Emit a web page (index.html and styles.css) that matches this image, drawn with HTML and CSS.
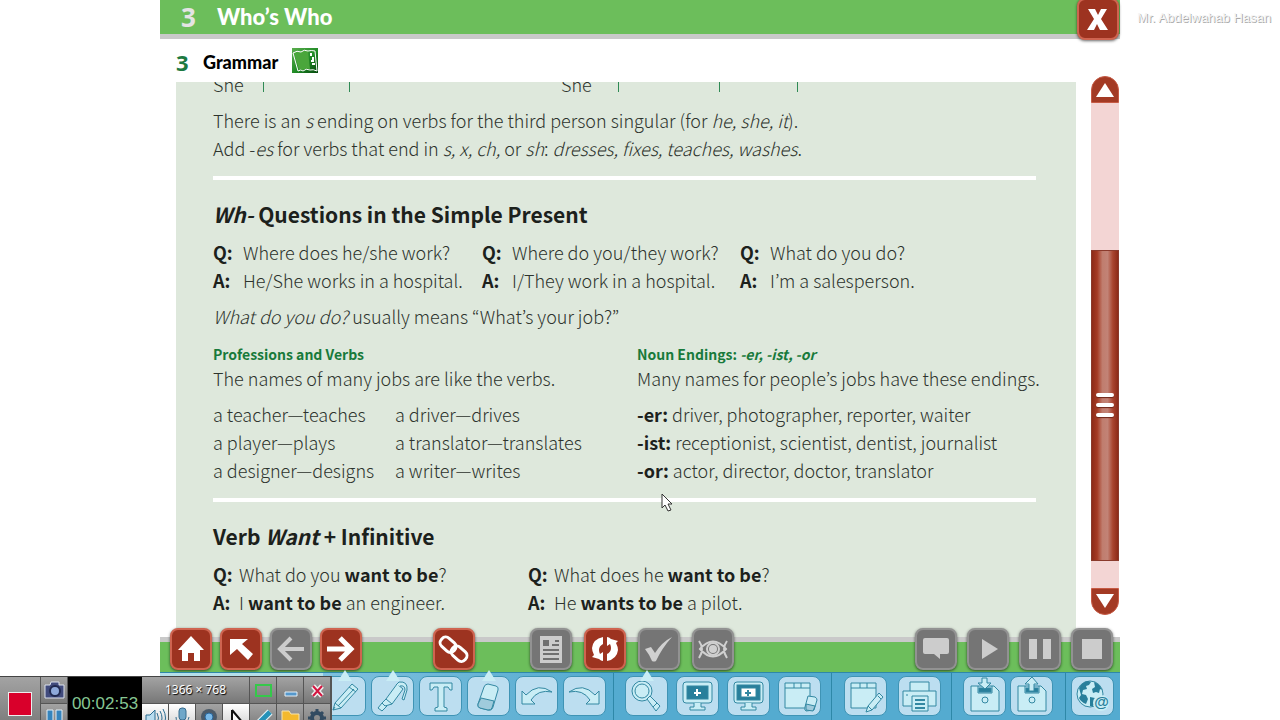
FILE: index.html
```
<!DOCTYPE html>
<html lang="en">
<head>
    <meta charset="UTF-8">
    <meta name="viewport" content="width=device-width, initial-scale=1.0">
    <title>Who's Who - Grammar</title>
    <link rel="stylesheet" href="styles.css">
</head>
<body>
    <div class="stage">
        <header class="unit-bar">
            <span class="unit-number">3</span>
            <h1>Who’s Who</h1>
            <button class="key close-key" aria-label="Close">
                <svg viewBox="0 0 42 42"><path fill="#fff" d="M11 11h7l3 6 3-6h6l-6 10 7 11h-8l-3-6-3 6h-7l7-11z"/></svg>
            </button>
        </header>

        <main class="page">
            <section class="left">
                <div class="lesson-title">
                    <span class="lesson-number">3</span>
                    <h2>Grammar</h2>
                    <svg class="book" viewBox="0 0 26 25">
                        <defs><linearGradient id="leaf" x1="0" y1="0" x2="1" y2="1"><stop offset="0" stop-color="#5cae4e"/><stop offset=".55" stop-color="#1f8a25"/><stop offset="1" stop-color="#04470c"/></linearGradient></defs>
                        <path fill="url(#leaf)" d="M0 0h26v25H0z"/>
                        <path fill="#4aa63b" d="M2 4q4-2 7 0 4-2 7-1l2 18q-4-1-7 1-2-1-4 0z"/>
                        <path fill="none" stroke="#fff" d="M1 5q4-3 8-1 3-3 7-1 3-1 7 0l2 20q-4-2-7-1-4-2-7 1-2-2-5 0z"/>
                        <path fill="none" stroke="#fff" stroke-width="2" d="M19 5v3m2 1v3m-2 1h3m-2 3h3"/>
                    </svg>
                </div>
                <article class="lesson">
                    <table class="verb-table">
                        <tr><td>She</td><td></td><td></td><td>She</td><td></td><td></td><td></td></tr>
                    </table>
                    <p class="note">There is an <i>s</i> ending on verbs for the third person singular (for <i>he, she, it</i>).<br>
                    Add -<i>es</i> for verbs that end in <i>s, x, ch,</i> or <i>sh</i>: <i>dresses, fixes, teaches, washes</i>.</p>
                    <hr>
                    <h3><i>Wh-</i> Questions in the Simple Present</h3>
                    <div class="questions three">
                        <dl><dt>Q:</dt><dd>Where does he/she work?</dd><dt>A:</dt><dd>He/She works in a hospital.</dd></dl>
                        <dl><dt>Q:</dt><dd>Where do you/they work?</dd><dt>A:</dt><dd>I/They work in a hospital.</dd></dl>
                        <dl><dt>Q:</dt><dd>What do you do?</dd><dt>A:</dt><dd>I’m a salesperson.</dd></dl>
                    </div>
                    <p class="usage"><i>What do you do?</i> usually means “What’s your job?”</p>
                    <div class="columns">
                        <section>
                            <h4>Professions and Verbs</h4>
                            <p>The names of many jobs are like the verbs.</p>
                            <div class="pairs">
                                <p>a teacher—teaches<br>a player—plays<br>a designer—designs</p>
                                <p>a driver—drives<br>a translator—translates<br>a writer—writes</p>
                            </div>
                        </section>
                        <section>
                            <h4>Noun Endings: <i>-er, -ist, -or</i></h4>
                            <p>Many names for people’s jobs have these endings.</p>
                            <p class="endings"><b>-er:</b> driver, photographer, reporter, waiter<br>
                            <b>-ist:</b> receptionist, scientist, dentist, journalist<br>
                            <b>-or:</b> actor, director, doctor, translator</p>
                        </section>
                    </div>
                    <hr>
                    <h3>Verb <i>Want</i> + Infinitive</h3>
                    <div class="questions two">
                        <dl><dt>Q:</dt><dd>What do you <b>want to be</b>?</dd><dt>A:</dt><dd>I <b>want to be</b> an engineer.</dd></dl>
                        <dl><dt>Q:</dt><dd>What does he <b>want to be</b>?</dd><dt>A:</dt><dd>He <b>wants to be</b> a pilot.</dd></dl>
                    </div>
                </article>
            </section>
            <div class="scroller">
                <button class="scroll-up" aria-label="Scroll up"><svg viewBox="0 0 28 27"><path fill="#fff" d="M14 7l9 14H5z"/></svg></button>
                <div class="track">
                    <div class="thumb"><span></span><span></span><span></span></div>
                </div>
                <button class="scroll-down" aria-label="Scroll down"><svg viewBox="0 0 28 27"><path fill="#fff" d="M14 20L5 6h18z"/></svg></button>
            </div>
        </main>

        <nav class="controls">
            <div class="keys start">
                <button class="key" aria-label="Home"><svg viewBox="0 0 42 42"><path fill="#fff" d="M21 8l13 14h-4v11h-6v-8h-6v8h-6V22H8z"/></svg></button>
                <button class="key" aria-label="Menu"><svg viewBox="0 0 42 42"><path fill="#fff" d="M10 11h18l-6 5 11 10-5 6-11-11-7 6z"/></svg></button>
                <button class="key off" aria-label="Back"><svg viewBox="0 0 42 42"><path fill="none" stroke="#ccc" stroke-width="4" d="M34 21H11m10-11L10 21l11 11"/></svg></button>
                <button class="key" aria-label="Next"><svg viewBox="0 0 42 42"><path fill="none" stroke="#fff" stroke-width="5" d="M7 21h24M20 10l11 11-11 11"/></svg></button>
            </div>
            <div class="keys">
                <button class="key" aria-label="Link"><svg viewBox="0 0 42 42"><g fill="none" stroke="#fff" stroke-width="3"><rect x="7" y="11" width="17" height="11" rx="5" transform="rotate(42 15 16)"/><rect x="18" y="20" width="17" height="11" rx="5" transform="rotate(42 26 25)"/></g></svg></button>
            </div>
            <div class="keys middle">
                <button class="key off" aria-label="Text"><svg viewBox="0 0 42 42"><path fill="#ccc" d="M10 8h22v27H10z"/><path fill="#707070" d="M13 12h6v6h-6zm12 0h4v2h-4zm-3 4h7v2h-7zm-9 5h16v2H13zm0 4h16v2H13zm0 5h16v2H13z"/></svg></button>
                <button class="key" aria-label="Reload"><svg viewBox="0 0 42 42"><g fill="#fff"><path id="turn" d="M19 9v7q-4 2-4 6 0 2 1 4l3-2v9q-2 0-4-2l-7-2 2-2q-2-4-2-7Q9 11 19 9z"/><use href="#turn" transform="rotate(180 21 21)"/></g></svg></button>
                <button class="key off" aria-label="Check"><svg viewBox="0 0 42 42"><path fill="#d0d0d0" d="M7 21l6-2 4 6Q24 14 34 9q-10 11-16 24-2 1-4 0-3-7-7-12z"/></svg></button>
                <button class="key off" aria-label="Show answers"><svg viewBox="0 0 42 42"><g fill="none" stroke="#d0d0d0" stroke-width="2"><path d="M8 21q13-15 26 0-13 15-26 0zM7 13q6 8 0 17M35 13q-6 8 0 17"/><circle cx="21" cy="21" r="6"/></g><circle cx="21" cy="21" r="4" fill="#d0d0d0"/></svg></button>
            </div>
            <div class="keys end">
                <button class="key off" aria-label="Transcript"><svg viewBox="0 0 42 42"><path fill="#ccc" d="M10 10h22q2 0 2 2v12q0 2-2 2h-7v5l-6-5h-9q-2 0-2-2V12q0-2 2-2z"/></svg></button>
                <button class="key off" aria-label="Play"><svg viewBox="0 0 42 42"><path fill="#ccc" d="M15 11l16 10-16 10z"/></svg></button>
                <button class="key off" aria-label="Pause"><svg viewBox="0 0 42 42"><path fill="#ccc" d="M10 11h8v20h-8zm14 0h8v20h-8z"/></svg></button>
                <button class="key off" aria-label="Stop"><svg viewBox="0 0 42 42"><path fill="#ccc" d="M11 11h20v20H11z"/></svg></button>
            </div>
        </nav>

        <nav class="tools">
            <div class="tool-group drawing">
                <button class="tool more" aria-label="Pencil"><svg viewBox="0 0 43 40"><path d="M12 27L29 8l6 5-17 19-8 2zM12 27l6 5M26 11l7 5M15 30L31 13M10 34l2-3"/></svg></button>
                <button class="tool more" aria-label="Marker"><svg viewBox="0 0 43 40"><path d="M15 23L26 8l6 5-11 15-7 2-3-3zM15 23l6 5M11 27l-4 5 4 3 5-5"/><path d="M25 9l3-3q9-1 8 8l-3 10-2-1 3-9q0-5-5-4"/></svg></button>
                <button class="tool" aria-label="Text"><svg viewBox="0 0 43 40"><path d="M11 7h22v7h-2l-2-3h-4v20l3 1v3H16v-3l3-1V11h-4l-2 3h-2z"/></svg></button>
                <button class="tool more" aria-label="Eraser"><svg viewBox="0 0 43 40"><path d="M17 11q1-3 4-3l8 2q3 1 2 4l-5 17q-1 4-5 3l-8-2q-3-1-2-4z"/><path fill="#9fcbdc" d="M14 22l13 3-2 7q-1 2-4 2l-8-2q-3-1-2-4z"/></svg></button>
                <button class="tool" aria-label="Undo"><svg viewBox="0 0 43 40"><path d="M7 15v13h13l-4-4q7-11 21-8Q23 6 11 19z"/></svg></button>
                <button class="tool" aria-label="Redo"><svg viewBox="0 0 43 40"><path d="M36 15v13H23l4-4q-7-11-21-8 14-10 26 3z"/></svg></button>
            </div>
            <div class="tool-group viewing">
                <button class="tool more" aria-label="Zoom"><svg viewBox="0 0 43 40"><circle cx="17" cy="15" r="10"/><circle cx="17" cy="15" r="7"/><path d="M22 23l3-3 10 10-4 5zM28 31l4-4"/></svg></button>
                <button class="tool" aria-label="Zoom screen"><svg viewBox="0 0 43 40"><rect x="7" y="6" width="29" height="21" rx="3"/><path d="M18 27v4h-4v3h15v-3h-4v-4"/><rect x="11" y="10" width="21" height="13" fill="#287f9b"/><path stroke="#fff" stroke-width="2" d="M21 13v7m-3-3h7"/></svg></button>
                <button class="tool" aria-label="Show screen"><svg viewBox="0 0 43 40"><rect x="7" y="6" width="29" height="21" rx="3"/><path d="M18 27v4h-4v3h15v-3h-4v-4"/><rect x="10" y="9" width="23" height="15" fill="#287f9b"/><rect x="14" y="12" width="15" height="9" fill="#fff"/><path stroke-width="2" d="M21 14v6m-3-3h6"/></svg></button>
                <button class="tool" aria-label="Clear page"><svg viewBox="0 0 43 40"><path d="M7 7h25v25H7zM7 12h25M16 7v5M23 7v5"/><path d="M30 20l7 1q2 1 2 3l-3 10-8 1q-2-1-1-4z"/><path fill="#9fcbdc" d="M28 28l9 2-2 5-7-1z"/></svg></button>
            </div>
            <div class="tool-group output">
                <button class="tool" aria-label="Edit page"><svg viewBox="0 0 43 40"><path d="M7 7h25v25H7zM7 12h25M16 7v5M23 7v5"/><path d="M24 30l11-13 4 4-11 13-6 2zM24 30l4 4M34 20l3 3"/></svg></button>
                <button class="tool" aria-label="Print"><svg viewBox="0 0 43 40"><path d="M12 6h19v9h7v15H5V15h7zM8 19h2M12 15h19"/><path d="M14 20h16v15H14z"/><path stroke-width="2" d="M17 24h10M17 28h10M17 32h10"/></svg></button>
            </div>
            <div class="tool-group saving">
                <button class="tool" aria-label="Save"><svg viewBox="0 0 43 40"><path d="M8 10h23l5 5v20H8zM15 10v7h14v-7"/><path fill="#287f9b" d="M16 12h12v4H16z"/><circle cx="22" cy="24" r="3"/><path d="M19 2h5v5h4l-6 6-7-6h4z"/></svg></button>
                <button class="tool" aria-label="Open"><svg viewBox="0 0 43 40"><path d="M8 10h23l5 5v20H8zM15 10v7h14v-7"/><path fill="#287f9b" d="M16 12h12v4H16z"/><circle cx="22" cy="24" r="3"/><path d="M19 15V8h-4l7-7 6 7h-4v7z"/></svg></button>
            </div>
            <div class="tool-group web">
                <button class="tool" aria-label="Web"><svg viewBox="0 0 43 40"><circle cx="19" cy="18" r="13"/><path fill="#287f9b" stroke="none" d="M8 12q3-6 9-7l3 1-2 3-3 1 1 3-4 1-1 4 4 1 2 4-2 5q-5-2-7-6l2-3zM23 6q6 2 8 8l-2-1-1 4-3-1-3 1-1-4 3-2zM19 21l5 1 1 3-3 5h-3z"/><circle cx="30" cy="27" r="8" stroke="none"/></svg><span class="at">@</span></button>
            </div>
        </nav>
    </div>

    <aside class="watermark">Mr. Abdelwahab Hasan</aside>

    <svg class="cursor" viewBox="0 0 12 19"><path fill="#fff" stroke="#333" d="M1 1v14l3-3 3 6 3-1-3-6h4z"/></svg>

    <!-- screen recorder, half below the window edge -->
    <div class="recorder">
        <button class="cell record" aria-label="Stop recording"><span></span></button>
        <button class="cell" aria-label="Take screenshot"><svg viewBox="0 0 27 27"><path fill="#414b7d" stroke="#dce2ee" d="M4 8h5l1-3h8v3h5v13H4z"/><circle cx="14" cy="14" r="5" fill="#8ea9da" stroke="#20294f" stroke-width="2"/></svg></button>
        <time class="timer">00:02:53</time>
        <span class="cell size">1366 × 768</span>
        <button class="cell" aria-label="Recording area"><svg viewBox="0 0 27 27"><path fill="none" stroke="#35c84a" stroke-width="2" d="M6 8h15v11H6z"/></svg></button>
        <button class="cell" aria-label="Minimize"><svg viewBox="0 0 27 27"><path fill="#5598cc" stroke="#e5eef5" d="M8 15h12v4H8z"/></svg></button>
        <button class="cell" aria-label="Close recorder"><svg viewBox="0 0 27 27"><path stroke="#eee" stroke-width="5" d="M9 9l9 10M18 9L9 19"/><path stroke="#d41540" stroke-width="2" d="M9 9l9 10M18 9L9 19"/></svg></button>
        <button class="cell" aria-label="Pause recording"><svg viewBox="0 0 27 27"><path fill="#3584bd" stroke="#e5eef5" d="M6 6h6v17H6zm9 0h6v17h-6z"/></svg></button>
        <button class="cell lit" aria-label="Sound"><svg viewBox="0 0 27 27"><g fill="#b8dcef" stroke="#2b6c91"><path d="M4 11h4l5-5v16l-5-5H4z"/><path fill="none" d="M15 9q3 5 0 10M18 7q4 7 0 14M21 5q5 9 0 18"/></g></svg></button>
        <button class="cell lit" aria-label="Microphone"><svg viewBox="0 0 27 27"><rect x="10" y="4" width="7" height="12" rx="3" fill="#6fa7c9" stroke="#376c8e"/><path fill="none" stroke="#376c8e" d="M7 13q0 6 6 6t7-6M13 19v5"/></svg></button>
        <button class="cell" aria-label="Webcam"><svg viewBox="0 0 27 27"><circle cx="13" cy="13" r="8" fill="#4b5a68"/><circle cx="13" cy="13" r="4" fill="#79b9e8" stroke="#28659a"/></svg></button>
        <button class="cell lit" aria-label="Show cursor"><svg viewBox="0 0 27 27"><path fill="#fff" stroke="#111" stroke-width="2" d="M9 6v17l4-4 3 7M9 6l11 13h-7"/></svg></button>
        <button class="cell" aria-label="Draw"><svg viewBox="0 0 27 27"><path stroke="#e8f5fa" stroke-width="7" d="M8 20L20 8"/><path stroke="#2592b8" stroke-width="5" d="M8 20L20 8"/></svg></button>
        <button class="cell" aria-label="Open folder"><svg viewBox="0 0 27 27"><path fill="#f4b92d" stroke="#f8e5ae" d="M5 7h7l2 3h8v13H5z"/></svg></button>
        <button class="cell" aria-label="Settings"><svg viewBox="0 0 27 27"><circle cx="13" cy="14" r="5" fill="none" stroke="#324b61" stroke-width="4"/><path stroke="#324b61" stroke-width="3" d="M13 5v4M13 19v4M4 14h4M18 14h4M7 8l3 3M16 17l3 3M19 8l-3 3M10 17l-3 3"/></svg></button>
    </div>
</body>
</html>
```
FILE: styles.css
```
* {
    box-sizing: border-box;
}

body {
    margin: 0;
    height: 100vh;
    overflow: hidden;
    display: grid;
    grid-template-columns: 1fr 6fr 1fr;
    background: #fff;
    color: #2d332d;
    font-family: "Noto Sans CJK KR", "Open Sans", sans-serif;
    font-size: 18px;
    font-weight: 300;
    line-height: 28px;
}

h1, h2, h3, h4, p, dl, dd {
    margin: 0;
}

button {
    padding: 0;
    border: 0;
    font: inherit;
    cursor: pointer;
}

svg {
    display: block;
}

.stage {
    grid-column: 2;
    display: flex;
    flex-direction: column;
    height: 100vh;
    min-width: 0;
}

/* top bar */
.unit-bar {
    display: flex;
    height: 39px;
    padding: 0 1px 0 21px;
    background: #6cbe5b;
    border-bottom: 5px solid #c9c9c9;
    font-family: Lato, sans-serif;
    line-height: 34px;
}

.unit-number {
    width: 36px;
    color: #e4e4e4;
    font-family: "Open Sans", sans-serif;
    font-size: 26px;
    font-weight: 700;
}

h1 {
    flex: 1;
    color: #fff;
    font-size: 22px;
    font-weight: 900;
}

.key {
    width: 42px;
    height: 42px;
    background: #9d3320;
    border: 2px solid #cf6450;
    border-radius: 8px;
    box-shadow: 0 1px 3px rgba(0, 0, 0, 0.6);
}

.key svg {
    width: 42px;
    height: 42px;
    margin: -2px;
}

.key.off {
    background: #757575;
    border-color: #929292;
}

.close-key {
    margin-top: -2px;
}

/* lesson page */
.page {
    flex: 1;
    min-height: 0;
    display: flex;
    gap: 15px;
    padding: 0 1px 0 16px;
}

.left {
    flex: 1;
    min-width: 0;
    display: flex;
    flex-direction: column;
}

.lesson-title {
    display: flex;
    align-items: center;
    height: 43px;
    padding-top: 3px;
    font-family: Lato, sans-serif;
}

.lesson-number {
    width: 27px;
    color: #1d7a41;
    font-family: "Open Sans", sans-serif;
    font-size: 22px;
    font-weight: 700;
}

h2 {
    color: #000;
    font-size: 18px;
    font-weight: 900;
}

.book {
    width: 26px;
    height: 25px;
    margin: 0 0 4px 14px;
}

.lesson {
    flex: 1;
    min-height: 0;
    overflow: hidden;
    padding: 0 40px 0 37px;
    background: #dee8dc;
}

.verb-table {
    width: 100%;
    margin-top: -6px;
    border-collapse: collapse;
    table-layout: fixed;
    line-height: 16px;
}

.verb-table td {
    padding: 0;
}

.verb-table td + td {
    border-left: 1px solid #2f8a55;
}

.verb-table td:nth-child(4) {
    border: 0;
    width: 57px;
}

.verb-table td:nth-child(1) { width: 50px; }
.verb-table td:nth-child(2) { width: 86px; }
.verb-table td:nth-child(3) { width: 212px; }
.verb-table td:nth-child(5) { width: 101px; }
.verb-table td:nth-child(6) { width: 78px; }

.note {
    margin-top: 14px;
}

hr {
    height: 4px;
    margin: 14px 0 18px;
    border: 0;
    background: #fff;
}

h3 {
    color: #1c211c;
    font-size: 21px;
    font-weight: 700;
    line-height: 32px;
}

b, dt {
    color: #1c211c;
    font-weight: 700;
}

.questions {
    display: grid;
    margin-top: 8px;
}

.three {
    grid-template-columns: 269fr 258fr 296fr;
}

.two {
    grid-template-columns: 315fr 508fr;
}

dl {
    display: grid;
    grid-template-columns: 30px 1fr;
    white-space: nowrap;
}

.two dl {
    grid-template-columns: 26px 1fr;
}

.usage {
    margin-top: 8px;
}

.columns {
    display: grid;
    grid-template-columns: 424fr 399fr;
    margin-top: 14px;
    white-space: nowrap;
}

.columns > section {
    min-width: 0;
}

h4 {
    color: #187a3b;
    font-size: 14px;
    font-weight: 700;
    line-height: 20px;
}

.pairs {
    display: grid;
    grid-template-columns: 182fr 242fr;
    margin-top: 8px;
}

.endings {
    margin-top: 8px;
}

/* scroll bar */
.scroller {
    display: flex;
    flex-direction: column;
    width: 28px;
    padding: 37px 0 22px;
}

.scroll-up, .scroll-down {
    height: 27px;
    background: #a33a24;
    border: 1px solid #c65a44;
    border-radius: 14px 14px 0 0;
}

.scroll-down {
    border-radius: 0 0 14px 14px;
}

.scroll-up svg, .scroll-down svg {
    width: 28px;
    height: 27px;
    margin: -1px;
}

.track {
    flex: 1;
    display: flex;
    flex-direction: column;
    padding-bottom: 27px;
    justify-content: flex-end;
    background: #f3d5d4;
}

.thumb {
    height: 68%;
    display: flex;
    flex-direction: column;
    align-items: center;
    justify-content: center;
    gap: 6px;
    background: linear-gradient(90deg, #8d2b18, #a53b25 20%, #c07d6e 40%, #c28376 60%, #a9452f 80%, #8d2b18);
    border: 1px solid #8a3a2c;
}

.thumb span {
    width: 18px;
    height: 4px;
    border-radius: 2px;
    background: #fff;
    box-shadow: 0 1px 1px #6d2416;
}

/* player controls */
.controls {
    display: flex;
    height: 35px;
    padding: 0 7px 0 10px;
    background: #6cbe5b;
    border-top: 5px solid #c9c9c9;
}

.keys {
    display: flex;
    margin-top: -14px;
}

.start {
    gap: 8px;
    margin-right: 71px;
}

.middle {
    gap: 12px;
    margin-left: 55px;
}

.end {
    gap: 10px;
    margin-left: auto;
}

/* drawing toolbar */
.tools {
    display: flex;
    height: 48px;
    background: #54abd0;
    border-top: 1px solid #2e88a8;
}

.tool-group {
    display: flex;
    padding-top: 3px;
    border-right: 1px solid #2e88a8;
}

.drawing {
    gap: 5px;
    padding-left: 163px;
    padding-right: 7px;
    background: linear-gradient(90deg, #b5dfe9 163px, #7fc0de 163px, #54abd0);
}

.viewing {
    gap: 8px;
    padding-left: 11px;
    padding-right: 10px;
}

.output {
    gap: 11px;
    padding-left: 12px;
    padding-right: 10px;
}

.saving {
    gap: 4px;
    padding-left: 11px;
    padding-right: 12px;
}

.web {
    padding-left: 5px;
    border: 0;
}

.tool {
    position: relative;
    width: 43px;
    height: 40px;
    background: #bcdef0;
    border: 1px solid #3f94b5;
    border-radius: 8px;
}

.tool svg {
    width: 43px;
    height: 40px;
    margin: -1px;
    fill: #c9edf5;
    stroke: #3388a2;
    stroke-width: 1;
}

/* little arrow that opens the tool options */
.more::before {
    content: "";
    position: absolute;
    top: -7px;
    left: 14px;
    width: 14px;
    height: 11px;
    background: #c9edf5;
    clip-path: polygon(50% 0, 100% 100%, 0 100%);
}

.at {
    position: absolute;
    right: 4px;
    bottom: 5px;
    color: #287f9b;
    font-family: "Liberation Sans", sans-serif;
    font-size: 15px;
    font-weight: 700;
    line-height: 16px;
}

.watermark {
    padding: 10px 9px 0 0;
    color: #f4f4f4;
    font-family: "Liberation Sans", sans-serif;
    font-size: 13px;
    font-weight: 400;
    line-height: 16px;
    text-align: right;
    text-shadow: 1px 1px 0 #aaa;
    white-space: nowrap;
}

.cursor {
    position: absolute;
    left: 661px;
    top: 493px;
    width: 12px;
    height: 19px;
}

/* recorder window */
.recorder {
    position: fixed;
    left: 0;
    bottom: -11px;
    display: grid;
    grid-template-columns: 41px 27px 74px repeat(7, 27px);
    grid-template-rows: 27px 27px;
    border-top: 1px solid #444;
    border-right: 1px solid #555;
    background: #888;
}

.cell {
    background: linear-gradient(#a3a3a3, #777);
    border-right: 1px solid #555;
    border-bottom: 1px solid #555;
}

.cell svg {
    width: 27px;
    height: 27px;
}

.lit {
    background: linear-gradient(#fff, #ccc);
}

.record {
    grid-row: span 2;
}

.record span {
    display: block;
    width: 24px;
    height: 24px;
    margin: 0 auto;
    border: 1px solid #eee;
    background: #d9002b;
}

.timer {
    grid-row: span 2;
    background: #000;
    color: #86c793;
    font-family: "Liberation Sans", sans-serif;
    font-size: 17px;
    font-weight: 400;
    line-height: 54px;
    text-align: center;
}

.size {
    grid-column: span 4;
    color: #fff;
    font-family: "Noto Sans", sans-serif;
    font-size: 12px;
    font-weight: 400;
    line-height: 26px;
    text-align: center;
    text-shadow: 1px 1px 1px #000;
}
```
